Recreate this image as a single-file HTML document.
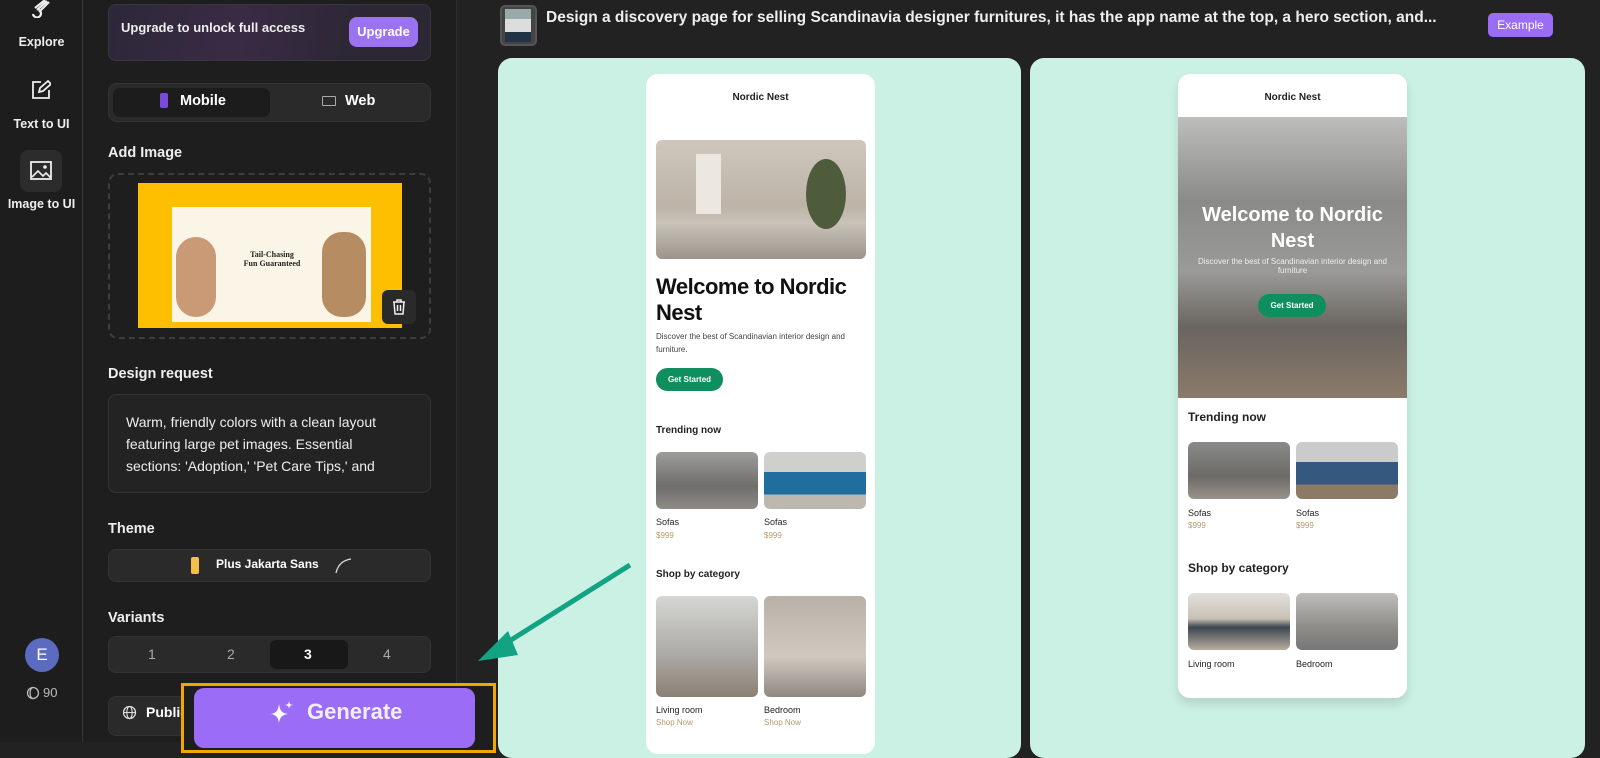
<!DOCTYPE html>
<html><head><meta charset="utf-8"><style>
*{box-sizing:border-box;margin:0;padding:0}
body{width:1600px;height:742px;overflow:hidden;background:#232222;font-family:"Liberation Sans",sans-serif;position:relative;color:#fff}
.abs{position:absolute}
.nav{left:0;top:0;width:83px;height:742px;background:#1d1d1d;border-right:1px solid #333}
.navi{width:83px;text-align:center;font-size:12.5px;color:#eee;font-weight:bold}
.side{left:84px;top:0;width:373px;height:742px;background:#1e1e1e;border-right:1px solid #2e2e2e}
.lbl{font-size:14.5px;font-weight:bold;color:#eee}
.box{background:#2a2a2a;border:1px solid #333;border-radius:8px}
.card{background:#cbf1e4;border-radius:14px;top:58px;height:700px}
.phone{background:#fff;border-radius:12px;color:#111;overflow:hidden}
.img{border-radius:6px;position:absolute}
.t{position:absolute;font-size:9px;color:#222}
.p{position:absolute;font-size:8px;color:#b59a68}
</style></head><body>
<div class="abs nav">
  <svg class="abs" style="left:29px;top:0" width="24" height="18" viewBox="0 0 24 18"><path d="M4 14a4 4 0 1 0 6-4M6 8L16 0M10 12L20 2M8 10l10-9" stroke="#eee" stroke-width="2.2" fill="none"/></svg>
  <div class="abs navi" style="top:35px">Explore</div>
  <svg class="abs" style="left:31px;top:80px" width="20" height="20" viewBox="0 0 20 20"><path d="M10 2H2v16h16v-8M8 12l1-4 8-7 3 3-8 7z" stroke="#eee" stroke-width="1.8" fill="none"/></svg>
  <div class="abs navi" style="top:117px">Text to UI</div>
  <div class="abs" style="left:20px;top:150px;width:42px;height:42px;background:#2c2c2c;border-radius:8px"></div>
  <svg class="abs" style="left:30px;top:161px" width="22" height="19" viewBox="0 0 22 19"><rect x="1" y="1" width="20" height="17" stroke="#eee" stroke-width="1.8" fill="none"/><path d="M2 16l6-6 5 5 3-3 5 5" stroke="#eee" stroke-width="1.6" fill="none"/><circle cx="15" cy="6" r="1.8" fill="#eee"/></svg>
  <div class="abs navi" style="top:197px">Image to UI</div>
  <div class="abs" style="left:25px;top:638px;width:34px;height:34px;border-radius:50%;background:#5b6bc0;text-align:center;line-height:34px;font-size:17px">E</div>
  <svg class="abs" style="left:26px;top:686px" width="14" height="14"><circle cx="7" cy="7" r="5.5" stroke="#bbb" stroke-width="1.3" fill="none"/><path d="M7 1.5a3 5.5 0 0 0 0 11" stroke="#bbb" stroke-width="1.3" fill="none"/></svg>
  <div class="abs" style="left:43px;top:685px;font-size:13px;color:#bbb">90</div>
</div>
<div class="abs side">
  <div class="abs" style="left:24px;top:4px;width:323px;height:57px;border-radius:8px;background:linear-gradient(100deg,#2c2838,#3a2b45 40%,#2b2733 80%);border:1px solid #3a3540"></div>
  <div class="abs" style="left:37px;top:20px;font-size:13px;font-weight:bold;color:#eee">Upgrade to unlock full access</div>
  <div class="abs" style="left:265px;top:17px;width:69px;height:30px;border-radius:8px;background:#9b72f0;font-size:13px;font-weight:bold;text-align:center;line-height:30px">Upgrade</div>
  <div class="abs box" style="left:24px;top:83px;width:323px;height:39px;border-radius:9px"></div>
  <div class="abs" style="left:29px;top:88px;width:157px;height:29px;background:#1c1c1c;border-radius:7px"></div>
  <div class="abs" style="left:76px;top:93px;width:8px;height:15px;border-radius:2px;background:#7a4bd8"></div>
  <div class="abs" style="left:96px;top:93px;font-size:14.5px;font-weight:bold">Mobile</div>
  <div class="abs" style="left:238px;top:96px;width:14px;height:10px;border:1.5px solid #aaa;border-radius:1px"></div>
  <div class="abs" style="left:261px;top:93px;font-size:14.5px;font-weight:bold">Web</div>
  <div class="abs lbl" style="left:24px;top:145px">Add Image</div>
  <div class="abs" style="left:24px;top:173px;width:323px;height:166px;border:2px dashed #3d3d3d;border-radius:10px"></div>
  <div class="abs" style="left:54px;top:183px;width:264px;height:145px;background:#fdbf00"></div>
  <div class="abs" style="left:88px;top:207px;width:199px;height:115px;background:#fbf5e8"></div>
  <div class="abs" style="left:148px;top:250px;font-size:8px;font-weight:bold;color:#222;text-align:center;width:80px;font-family:'Liberation Serif',serif">Tail-Chasing<br>Fun Guaranteed</div>
  <div class="abs" style="left:92px;top:237px;width:40px;height:80px;border-radius:20px;background:#c99a75"></div>
  <div class="abs" style="left:238px;top:232px;width:44px;height:85px;border-radius:20px;background:#b68c62"></div>
  <div class="abs" style="left:298px;top:290px;width:34px;height:34px;border-radius:6px;background:#2a2a2a"></div>
  <svg class="abs" style="left:308px;top:299px" width="14" height="16" viewBox="0 0 14 16"><path d="M1 3h12M5 3V1h4v2M2 3l1 12h8l1-12M5.5 6v6M8.5 6v6" stroke="#eee" stroke-width="1.5" fill="none"/></svg>
  <div class="abs lbl" style="left:24px;top:366px">Design request</div>
  <div class="abs box" style="left:24px;top:394px;width:323px;height:99px;background:#232323"></div>
  <div class="abs" style="left:42px;top:411px;width:262px;font-size:14px;line-height:22px;color:#eee">Warm, friendly colors with a clean layout featuring large pet images. Essential sections: 'Adoption,' 'Pet Care Tips,' and</div>
  <div class="abs lbl" style="left:24px;top:521px">Theme</div>
  <div class="abs box" style="left:24px;top:549px;width:323px;height:33px"></div>
  <div class="abs" style="left:107px;top:557px;width:8px;height:17px;background:#f2c04a;border-radius:2px"></div>
  <div class="abs" style="left:132px;top:557px;font-size:12px;font-weight:bold">Plus Jakarta Sans</div>
  <svg class="abs" style="left:251px;top:558px" width="18" height="16"><path d="M1 15C3 6 9 2 16 1" stroke="#ddd" stroke-width="1.3" fill="none"/></svg>
  <div class="abs lbl" style="left:24px;top:610px">Variants</div>
  <div class="abs box" style="left:24px;top:636px;width:323px;height:37px"></div>
  <div class="abs" style="left:186px;top:640px;width:78px;height:29px;background:#181818;border-radius:6px"></div>
  <div class="abs" style="left:64px;top:646px;font-size:14px;color:#aaa">1</div>
  <div class="abs" style="left:143px;top:646px;font-size:14px;color:#aaa">2</div>
  <div class="abs" style="left:220px;top:646px;font-size:14px;font-weight:bold">3</div>
  <div class="abs" style="left:299px;top:646px;font-size:14px;color:#aaa">4</div>
  <div class="abs box" style="left:24px;top:696px;width:120px;height:40px"></div>
  <svg class="abs" style="left:38px;top:705px" width="15" height="15"><circle cx="7.5" cy="7.5" r="6" stroke="#ddd" stroke-width="1.3" fill="none"/><ellipse cx="7.5" cy="7.5" rx="2.7" ry="6" stroke="#ddd" stroke-width="1.1" fill="none"/><path d="M1.5 7.5h12" stroke="#ddd" stroke-width="1.1"/></svg>
  <div class="abs" style="left:62px;top:704px;font-size:14px;font-weight:bold">Public</div>
</div>
<div class="abs" style="left:181px;top:683px;width:315px;height:70px;border:3px solid #f0a800;background:#1e1e1e"></div>
<div class="abs" style="left:194px;top:688px;width:281px;height:60px;border-radius:10px;background:#9b6cf5"></div>
<svg class="abs" style="left:270px;top:700px" width="24" height="24" viewBox="0 0 24 24"><path d="M9 4C10 11 12 13 18 14C12 15 10 17 9 23C8 17 6 15 1 14C6 13 8 11 9 4Z" fill="#fff"/><path d="M19 1C19.5 4 20 4.5 23 5C20 5.5 19.5 6 19 9C18.5 6 18 5.5 15 5C18 4.5 18.5 4 19 1Z" fill="#fff"/></svg>
<div class="abs" style="left:307px;top:699px;font-size:22px;font-weight:bold;color:#f3eefe">Generate</div>

<div class="abs" style="left:500px;top:5px;width:37px;height:41px;border-radius:5px;background:#444;border:2px solid #555"></div>
<div class="abs" style="left:505px;top:9px;width:26px;height:33px;background:linear-gradient(#9aa 0 30%,#ddd 30% 70%,#234 70%)"></div>
<div class="abs" style="left:546px;top:9px;font-size:15.5px;font-weight:bold;color:#eee">Design a discovery page for selling Scandinavia designer furnitures, it has the app name at the top, a hero section, and...</div>
<div class="abs" style="left:1488px;top:13px;width:65px;height:24px;border-radius:5px;background:#9b6cf5;font-size:12px;text-align:center;line-height:24px">Example</div>

<div class="abs card" style="left:498px;width:523px"></div>
<div class="abs card" style="left:1030px;width:555px"></div>

<div class="abs phone" style="left:646px;top:74px;width:229px;height:680px">
  <div class="t" style="left:0;width:229px;text-align:center;top:18px;font-size:10px;font-weight:bold">Nordic Nest</div>
  <div class="img" style="left:10px;top:66px;width:210px;height:119px;background:linear-gradient(180deg,#cfc7bd 0,#bdb3a7 55%,#c8c2b9 70%,#9c948a 100%)"></div>
  <div class="img" style="left:50px;top:80px;width:25px;height:60px;background:#ece8e0;border-radius:0"></div>
  <div class="img" style="left:160px;top:85px;width:40px;height:70px;background:#4f5c3c;border-radius:50%"></div>
  <div class="t" style="left:10px;top:200px;font-size:22px;font-weight:bold;line-height:26px;color:#111;letter-spacing:-.5px">Welcome to Nordic<br>Nest</div>
  <div class="t" style="left:10px;top:256px;font-size:8px;line-height:13px;color:#444;width:210px">Discover the best of Scandinavian interior design and furniture.</div>
  <div class="abs" style="left:10px;top:294px;width:67px;height:23px;border-radius:12px;background:#0f8f5e;color:#fff;font-size:8px;font-weight:bold;text-align:center;line-height:23px">Get Started</div>
  <div class="t" style="left:10px;top:351px;font-size:10px;font-weight:bold">Trending now</div>
  <div class="img" style="left:10px;top:378px;width:102px;height:57px;background:linear-gradient(#9d9d9b,#6f6e6b 60%,#8e8b86)"></div>
  <div class="img" style="left:118px;top:378px;width:102px;height:57px;background:linear-gradient(#cfcfcb 0 35%,#1f6e9e 35% 75%,#bcb8b0 75%)"></div>
  <div class="t" style="left:10px;top:443px">Sofas</div><div class="p" style="left:10px;top:457px">$999</div>
  <div class="t" style="left:118px;top:443px">Sofas</div><div class="p" style="left:118px;top:457px">$999</div>
  <div class="t" style="left:10px;top:495px;font-size:10px;font-weight:bold">Shop by category</div>
  <div class="img" style="left:10px;top:522px;width:102px;height:101px;background:linear-gradient(#d6d6d4,#a9a8a3 60%,#8c8075)"></div>
  <div class="img" style="left:118px;top:522px;width:102px;height:101px;background:linear-gradient(#b8b1a8,#d0c9c0 60%,#8f8880)"></div>
  <div class="t" style="left:10px;top:631px">Living room</div><div class="p" style="left:10px;top:644px">Shop Now</div>
  <div class="t" style="left:118px;top:631px">Bedroom</div><div class="p" style="left:118px;top:644px">Shop Now</div>
</div>

<div class="abs phone" style="left:1178px;top:74px;width:229px;height:624px;box-shadow:0 6px 10px rgba(0,0,0,.12)">
  <div class="t" style="left:0;width:229px;text-align:center;top:18px;font-size:10px;font-weight:bold">Nordic Nest</div>
  <div class="abs" style="left:0;top:43px;width:229px;height:281px;background:linear-gradient(180deg,#bdbdbb 0,#8a8a88 30%,#9a9a98 55%,#6a6560 75%,#8a7b6a 100%)"></div>
  <div class="t" style="left:0;top:128px;width:229px;text-align:center;font-size:20px;font-weight:bold;line-height:26px;color:#fff">Welcome to Nordic<br>Nest</div>
  <div class="t" style="left:10px;top:183px;width:209px;text-align:center;font-size:8px;color:#eee">Discover the best of Scandinavian interior design and furniture</div>
  <div class="abs" style="left:80px;top:220px;width:68px;height:23px;border-radius:12px;background:#0f8f5e;color:#fff;font-size:8px;font-weight:bold;text-align:center;line-height:23px">Get Started</div>
  <div class="t" style="left:10px;top:336px;font-size:12px;font-weight:bold">Trending now</div>
  <div class="img" style="left:10px;top:368px;width:102px;height:57px;background:linear-gradient(#8a8a88,#6c6b68 60%,#98928a)"></div>
  <div class="img" style="left:118px;top:368px;width:102px;height:57px;background:linear-gradient(#c9cbcc 0 35%,#35597e 35% 75%,#8a7a66 75%)"></div>
  <div class="t" style="left:10px;top:434px">Sofas</div><div class="p" style="left:10px;top:447px">$999</div>
  <div class="t" style="left:118px;top:434px">Sofas</div><div class="p" style="left:118px;top:447px">$999</div>
  <div class="t" style="left:10px;top:487px;font-size:12px;font-weight:bold">Shop by category</div>
  <div class="img" style="left:10px;top:519px;width:102px;height:57px;background:linear-gradient(#e2e0dc,#c8c0b4 45%,#3d4650 60%,#b8ad9f)"></div>
  <div class="img" style="left:118px;top:519px;width:102px;height:57px;background:linear-gradient(#bfbebc,#8e8c88 60%,#777)"></div>
  <div class="t" style="left:10px;top:585px">Living room</div>
  <div class="t" style="left:118px;top:585px">Bedroom</div>
</div>

<svg class="abs" style="left:470px;top:555px" width="170" height="115"><path d="M160 10L22 97" stroke="#12a383" stroke-width="5"/><path d="M8 106L38 76L48 100Z" fill="#12a383"/></svg>
</body></html>
